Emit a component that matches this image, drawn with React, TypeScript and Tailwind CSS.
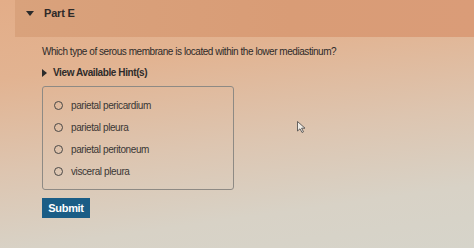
export default function App() {
  const options = ["parietal pericardium", "parietal pleura", "parietal peritoneum", "visceral pleura"];
  return (
    <div
      className="w-[474px] h-[248px] overflow-hidden relative bg-[linear-gradient(172deg,#e3ad88_0%,#e2b391_25%,#ddc5b0_55%,#d8d2c6_80%,#d6d4ca_100%)] text-[#2e2b2a]"
      style={{ fontFamily: '"Liberation Sans", Arial, sans-serif' }}
    >
      <div className="ml-[15px] h-[37px] bg-[linear-gradient(90deg,#d9a27c,#d99c76_60%,#da9c78)] flex items-start pt-[7px]">
        <svg width="8" height="6" viewBox="0 0 8 6" className="ml-[11px] mr-[10px] mt-[4px]">
          <path d="M0 0 L8 0 L4 5 Z" fill="#2b2b2b" />
        </svg>
        <span className="text-[11px] leading-[13px] font-bold tracking-[-0.2px] text-[#2e2a28]">Part E</span>
      </div>
      <div className="pl-[42px]">
        <div className="mt-[8px] text-[10px] leading-[13px] tracking-[-0.45px]">
          Which type of serous membrane is located within the lower mediastinum?
        </div>
        <div className="mt-[8px] flex items-center">
          <svg width="5" height="8" viewBox="0 0 5 8" className="mr-[6px]">
            <path d="M0 0 L5 4 L0 8 Z" fill="#2b2b2b" />
          </svg>
          <span className="text-[10px] font-bold leading-[13px] tracking-[-0.4px]">View Available Hint(s)</span>
        </div>
        <div className="mt-[7px] w-[192px] h-[104px] border border-[#8e8a84] rounded-[3px] flex flex-col pt-[12px] gap-[9px] pl-[11px]">
          {options.map((o) => (
            <div key={o} className="flex items-center h-[13px]">
              <span className="w-[9px] h-[9px] rounded-full border border-[#4a4846] mr-[8px]" />
              <span className="text-[10px] leading-[13px] tracking-[-0.4px] text-[#3a3735]">{o}</span>
            </div>
          ))}
        </div>
        <button className="mt-[8px] w-[48px] h-[20px] bg-[#1a5d86] text-white text-[11px] font-bold tracking-[-0.3px] flex items-center justify-center">
          Submit
        </button>
      </div>
      <svg width="9" height="12" viewBox="0 0 9 12" className="absolute left-[297px] top-[121px]">
        <path d="M0.5 0.5 L0.5 10 L3 7.8 L5 11.5 L6.5 10.8 L4.6 7.2 L8 7.2 Z" fill="#f0ece6" stroke="#444" strokeWidth="0.8" />
      </svg>
    </div>
  );
}
